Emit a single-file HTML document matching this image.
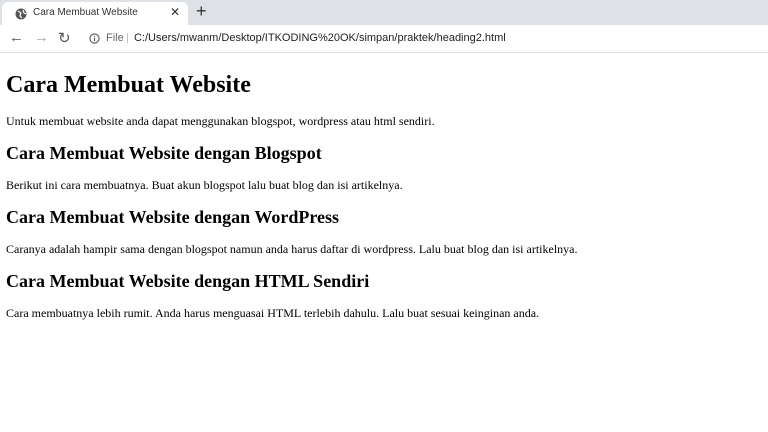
<!DOCTYPE html>
<html><head><style>
body{margin:0;width:768px;height:432px;overflow:hidden;background:#fff;font-family:"Liberation Serif",serif;color:#000;position:relative}
.tabbar{position:absolute;top:0;left:0;width:768px;height:25px;background:#dee1e6}
.tab{position:absolute;left:2px;top:2px;width:186px;height:23px;background:#fff;border-radius:6px 6px 0 0}
.tab .t{position:absolute;left:31px;top:5px;font:10px "Liberation Sans",sans-serif;color:#333}
.tab .x{position:absolute;left:168px;top:3px;font:12px "Liberation Sans",sans-serif;color:#333}
.plus{position:absolute;left:196px;top:1px;font:18px "Liberation Sans",sans-serif;color:#333}
.tool{position:absolute;top:25px;left:0;width:768px;height:27px;background:#fff;border-bottom:1px solid #ddd}
.url{position:absolute;top:7px;font:11px "Liberation Sans",sans-serif;color:#222;white-space:nowrap}
.ic{position:absolute;top:4px;font:15px "Liberation Sans",sans-serif;color:#555}
.c{position:absolute;left:6px;top:54px;right:0}
h1{font-size:24px;margin:17px 0 0;line-height:28px}
p{font-size:12px;margin:15px 0 0;line-height:14px}
h2{font-size:18px;margin:15px 0 0;line-height:21px}
h2+p{margin-top:14px}
</style></head><body>
<div class="tabbar"><div class="tab">
<svg style="position:absolute;left:13px;top:6px" width="12" height="12" viewBox="0 0 12 12"><circle cx="6" cy="6" r="5.5" fill="#555"/><path d="M3 3l3 2-1 3 2 2M8 2l1 3 2 1" stroke="#fff" stroke-width="1.2" fill="none"/></svg>
<span class="t">Cara Membuat Website</span><span class="x">✕</span></div><span class="plus">+</span></div>
<div class="tool">
<span class="ic" style="left:9px">←</span><span class="ic" style="left:34px;color:#aaa">→</span><span class="ic" style="left:58px">↻</span>
<svg style="position:absolute;left:89px;top:8px" width="11" height="11" viewBox="0 0 12 12"><circle cx="6" cy="6" r="5" stroke="#555" fill="none" stroke-width="1.2"/><path d="M6 5v4M6 3v1" stroke="#555" stroke-width="1.3"/></svg>
<span class="url" style="left:106px;color:#666">File</span><span class="url" style="left:126px;color:#bbb">|</span>
<span class="url" style="left:134px">C:/Users/mwanm/Desktop/ITKODING%20OK/simpan/praktek/heading2.html</span>
</div>
<div class="c">
<h1>Cara Membuat Website</h1>
<p>Untuk membuat website anda dapat menggunakan blogspot, wordpress atau html sendiri.</p>
<h2>Cara Membuat Website dengan Blogspot</h2>
<p>Berikut ini cara membuatnya. Buat akun blogspot lalu buat blog dan isi artikelnya.</p>
<h2>Cara Membuat Website dengan WordPress</h2>
<p>Caranya adalah hampir sama dengan blogspot namun anda harus daftar di wordpress. Lalu buat blog dan isi artikelnya.</p>
<h2>Cara Membuat Website dengan HTML Sendiri</h2>
<p>Cara membuatnya lebih rumit. Anda harus menguasai HTML terlebih dahulu. Lalu buat sesuai keinginan anda.</p>
</div>
</body></html>
